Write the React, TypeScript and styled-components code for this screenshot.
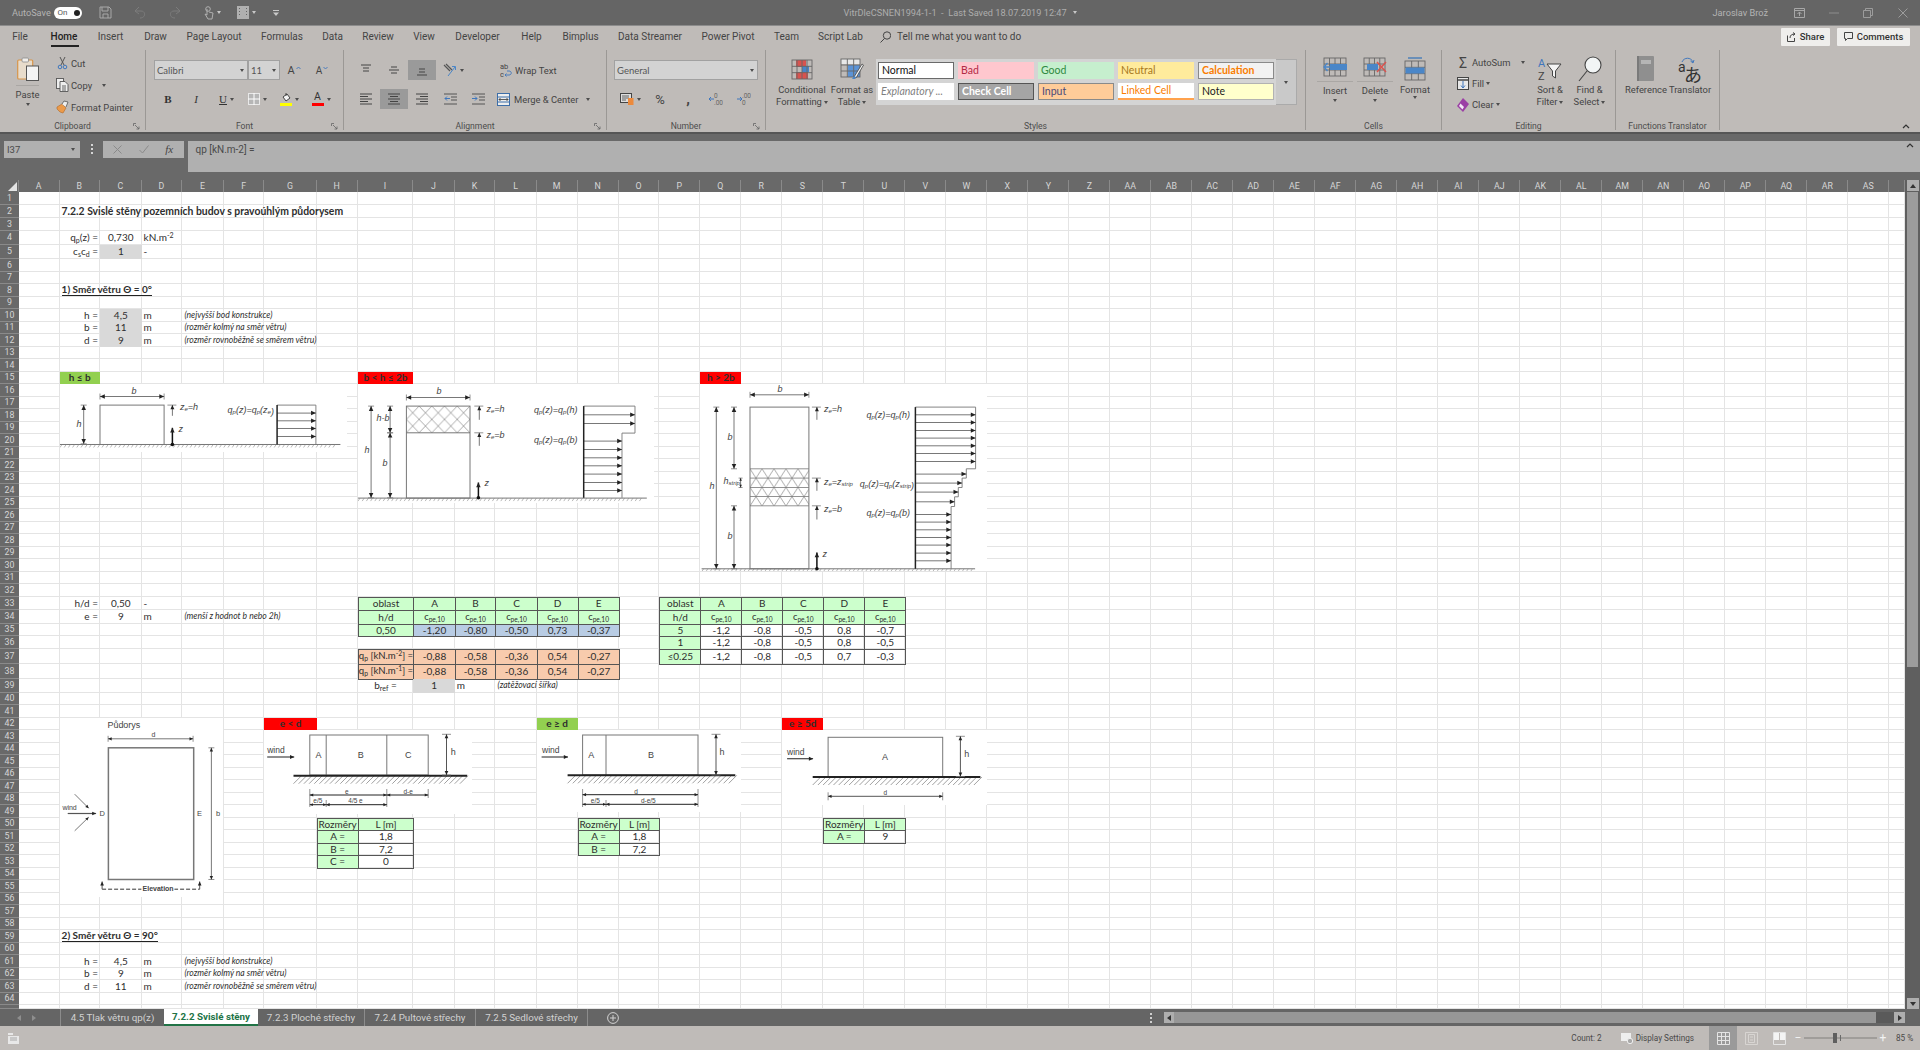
import React from "react";
import styled, { createGlobalStyle } from "styled-components";

const UI = `Roboto, "Liberation Sans", sans-serif`;
const CELL = `Lato, "Liberation Sans", sans-serif`;

const GlobalStyle = createGlobalStyle`
  html, body { margin: 0; padding: 0; background: #696969; }
  * { box-sizing: border-box; }
  #root { width: 1920px; height: 1050px; overflow: hidden; }
`;

const Window = styled.div`
  width: 1920px;
  height: 1050px;
  display: flex;
  flex-direction: column;
  overflow: hidden;
  font-family: ${UI};
  background: #696969;
`;

/* ---------- small shared parts ---------- */

const Ico = styled.svg`
  display: block;
  flex-shrink: 0;
`;

const Caret = styled.span<{ $light?: boolean }>`
  display: inline-block;
  flex-shrink: 0;
  width: 0;
  height: 0;
  border-left: 2.5px solid transparent;
  border-right: 2.5px solid transparent;
  border-top: 3px solid ${(p) => (p.$light ? "#c8c8c8" : "#4d4d4d")};
`;

/* ---------- title bar ---------- */

const TitleBar = styled.div`
  height: 26px;
  flex-shrink: 0;
  display: grid;
  grid-template-columns: 1fr auto 1fr;
  align-items: center;
  background: #656565;
  border-bottom: 1px solid #8c8c8c;
  color: #b4b4b4;
  font-size: 9.2px;
`;

const TitleLeft = styled.div`
  display: flex;
  align-items: center;
  padding-left: 12px;
`;

const AutoSaveLabel = styled.span`
  width: 41.5px;
`;

const Toggle = styled.div`
  width: 28.5px;
  height: 12px;
  border-radius: 6px;
  background: #fff;
  color: #555;
  display: flex;
  align-items: center;
  justify-content: space-between;
  padding: 0 2.5px 0 4px;
  font-size: 8px;
  margin-right: 8px;
`;

const ToggleDot = styled.i`
  width: 6px;
  height: 6px;
  border-radius: 50%;
  background: #222;
`;

const QatCell = styled.div<{ $w: number }>`
  width: ${(p) => p.$w}px;
  display: flex;
  align-items: center;
  justify-content: center;
  gap: 3px;
`;

const TitleText = styled.div`
  display: flex;
  align-items: center;
  gap: 6px;
  white-space: nowrap;
  color: #adadad;
`;

const TitleRight = styled.div`
  display: flex;
  align-items: center;
  justify-content: flex-end;
`;

const UserName = styled.span`
  margin-right: 14px;
`;

const WinButton = styled.div`
  width: 34.5px;
  display: flex;
  justify-content: center;
`;

/* ---------- ribbon ---------- */

const Ribbon = styled.div`
  height: 108px;
  flex-shrink: 0;
  background: #bfbbb8;
  border-bottom: 2px solid #565656;
  color: #444;
  font-size: 9.4px;
`;

const TabRow = styled.div`
  height: 24px;
  display: flex;
  align-items: flex-start;
  padding-right: 10px;
`;

const RibbonTab = styled.div<{ $w: number; $active?: boolean }>`
  width: ${(p) => p.$w}px;
  height: 21px;
  display: flex;
  align-items: center;
  justify-content: center;
  font-size: 10px;
  color: ${(p) => (p.$active ? "#222" : "#444")};
  font-weight: ${(p) => (p.$active ? 500 : 400)};
  position: relative;
  &::after {
    content: "";
    display: ${(p) => (p.$active ? "block" : "none")};
    position: absolute;
    left: 11px;
    right: 9px;
    bottom: 0;
    height: 2px;
    background: #222;
  }
`;

const SearchHint = styled.div`
  height: 21px;
  display: flex;
  align-items: center;
  gap: 6px;
  margin-left: 6px;
  font-size: 10px;
  color: #444;
`;

const TopActions = styled.div`
  margin-left: auto;
  display: flex;
  gap: 7px;
  margin-top: 2px;
`;

const TopButton = styled.div<{ $w: number }>`
  width: ${(p) => p.$w}px;
  height: 17.5px;
  background: #efeeec;
  border-radius: 1px;
  display: flex;
  align-items: center;
  justify-content: center;
  gap: 4px;
  font-size: 9.5px;
  font-weight: 500;
  color: #333;
`;

const GroupRow = styled.div`
  height: 82px;
  display: flex;
`;

const Group = styled.div<{ $w: number }>`
  width: ${(p) => p.$w}px;
  height: 80px;
  flex-shrink: 0;
  display: flex;
  flex-direction: column;
  border-right: 1px solid #9b9895;
`;

const GroupBody = styled.div<{ $pl: number; $col?: boolean }>`
  flex: 1;
  min-height: 0;
  display: flex;
  flex-direction: ${(p) => (p.$col ? "column" : "row")};
  padding-left: ${(p) => p.$pl}px;
`;

const GroupLabel = styled.div`
  height: 12px;
  margin-bottom: -2px;
  display: flex;
  align-items: center;
  justify-content: center;
  position: relative;
  font-size: 8.6px;
  color: #4c4c4c;
`;

const Launcher = styled.svg`
  position: absolute;
  right: 5px;
  top: 3px;
`;

const CollapseEnd = styled.div`
  flex: 1;
  display: flex;
  justify-content: flex-end;
  align-items: flex-end;
  padding: 0 10px 3px 0;
`;

/* clipboard */
const SplitButton = styled.div<{ $w: number }>`
  width: ${(p) => p.$w}px;
  display: flex;
  flex-direction: column;
  align-items: center;
  padding-top: 7px;
`;

const SplitRule = styled.div`
  align-self: stretch;
  height: 1px;
  margin: 4px 2px 3px;
  background: #aaa7a4;
`;

const SplitLabel = styled.div`
  height: 11px;
  line-height: 11px;
  margin-bottom: 3px;
`;

const SmallColumn = styled.div<{ $ml?: number; $w?: number }>`
  display: flex;
  flex-direction: column;
  margin-left: ${(p) => p.$ml ?? 0}px;
  width: ${(p) => (p.$w ? `${p.$w}px` : "auto")};
  padding-top: 2px;
`;

const SmallRow = styled.div<{ $h?: number }>`
  height: ${(p) => p.$h ?? 22}px;
  display: flex;
  align-items: center;
  gap: 2px;
  white-space: nowrap;
`;

const IconSlot = styled.div`
  width: 14px;
  display: flex;
  justify-content: center;
  flex-shrink: 0;
`;

/* tool rows */
const ToolRow = styled.div<{ $mt: number }>`
  display: flex;
  align-items: center;
  margin-top: ${(p) => p.$mt}px;
  height: 20px;
  white-space: nowrap;
`;

const ToolCell = styled.div<{ $w?: number; $on?: boolean }>`
  width: ${(p) => p.$w ?? 28}px;
  height: 20px;
  flex-shrink: 0;
  display: flex;
  align-items: center;
  justify-content: center;
  gap: 3px;
  background: ${(p) => (p.$on ? "#9a9a9a" : "transparent")};
`;

const Combo = styled.div<{ $w: number; $mr?: number }>`
  width: ${(p) => p.$w}px;
  height: 19.5px;
  margin-right: ${(p) => p.$mr ?? 0}px;
  flex-shrink: 0;
  display: flex;
  align-items: center;
  justify-content: space-between;
  padding: 0 3px 0 2px;
  background: #d3d3d3;
  border: 1px solid #a1a1a1;
  font-family: ${CELL};
  font-size: 9.5px;
  color: #555;
`;

const ToolLetter = styled.span<{ $bold?: boolean; $italic?: boolean; $under?: boolean }>`
  font-family: "Liberation Serif", serif;
  font-size: 11px;
  line-height: 11px;
  color: #333;
  font-weight: ${(p) => (p.$bold ? 700 : 400)};
  font-style: ${(p) => (p.$italic ? "italic" : "normal")};
  text-decoration: ${(p) => (p.$under ? "underline" : "none")};
`;

const SansLetter = styled.span<{ $size?: number; $bold?: boolean }>`
  font-size: ${(p) => p.$size ?? 11}px;
  font-weight: ${(p) => (p.$bold ? 700 : 400)};
  color: #444;
`;

const LetterWithBar = styled.div<{ $bar: string }>`
  display: flex;
  flex-direction: column;
  align-items: center;
  width: 12px;
  font-size: 10.5px;
  line-height: 10px;
  color: #333;
  &::after {
    content: "";
    width: 12px;
    height: 3px;
    background: ${(p) => p.$bar};
    margin-top: 1px;
  }
`;

const FillWithBar = styled(LetterWithBar)`
  line-height: 0;
`;

const TextAfter = styled.span<{ $ml?: number }>`
  margin-left: ${(p) => p.$ml ?? 3}px;
  display: inline-flex;
  align-items: center;
`;

/* big buttons */
const BigButton = styled.div<{ $w: number }>`
  width: ${(p) => p.$w}px;
  flex-shrink: 0;
  display: flex;
  flex-direction: column;
  align-items: center;
  padding-top: 7px;
`;

const BigIconBox = styled.div`
  height: 24px;
  display: flex;
  align-items: center;
`;

const BigText = styled.div`
  margin-top: 3px;
  line-height: 12px;
  text-align: center;
  white-space: nowrap;
  display: flex;
  flex-direction: column;
  align-items: center;
`;

const BigLine = styled.div`
  display: flex;
  align-items: center;
  gap: 2px;
`;

/* styles gallery */
const GalleryWrap = styled.div`
  display: flex;
  height: 46px;
  margin-top: 9px;
`;

const Gallery = styled.div`
  width: 400px;
  display: grid;
  grid-template-columns: repeat(5, 76px);
  grid-auto-rows: 17px;
  column-gap: 4px;
  row-gap: 4px;
  padding: 3px 0 0 2px;
  background: #d4d4d4;
`;

const StyleChip = styled.div<{
  $bg: string;
  $fg: string;
  $line?: string;
  $under?: string;
  $bold?: boolean;
  $italic?: boolean;
}>`
  display: flex;
  align-items: center;
  padding: 0 0 1px 3px;
  font-family: ${CELL};
  font-size: 10.5px;
  white-space: nowrap;
  background: ${(p) => p.$bg};
  color: ${(p) => p.$fg};
  border: ${(p) => (p.$line ? `1px solid ${p.$line}` : "none")};
  border-bottom: ${(p) => (p.$under ? `2px solid ${p.$under}` : p.$line ? `1px solid ${p.$line}` : "none")};
  font-weight: ${(p) => (p.$bold ? 700 : 400)};
  font-style: ${(p) => (p.$italic ? "italic" : "normal")};
`;

const GalleryMore = styled.div`
  width: 21px;
  display: flex;
  align-items: center;
  justify-content: center;
  background: #c9c9c9;
  border: 1px solid #aaa;
  border-left: none;
`;

/* ---------- formula bar ---------- */

const FormulaArea = styled.div`
  height: 46px;
  flex-shrink: 0;
  display: flex;
  align-items: flex-start;
  padding: 7px 0 0 4px;
  color: #4a4a4a;
  font-size: 9.5px;
`;

const NameBox = styled.div`
  width: 76px;
  height: 16.5px;
  display: flex;
  align-items: center;
  justify-content: space-between;
  padding: 0 5px 0 3px;
  background: #b0b0b0;
`;

const FormulaDots = styled.div`
  width: 23px;
  height: 16.5px;
  display: flex;
  flex-direction: column;
  align-items: center;
  justify-content: center;
  gap: 2px;
  & > i {
    width: 2px;
    height: 2px;
    background: #d6d6d6;
  }
`;

const FormulaButtons = styled.div`
  width: 80.5px;
  height: 16.5px;
  display: flex;
  align-items: center;
  justify-content: space-around;
  padding: 0 2px;
  background: #b0b0b0;
`;

const FxMark = styled.span`
  font-family: "Liberation Serif", serif;
  font-style: italic;
  font-size: 11px;
  color: #444;
`;

const FormulaInput = styled.div`
  flex: 1;
  height: 30.5px;
  margin-left: 4px;
  display: flex;
  justify-content: space-between;
  padding: 2px 6px 0 8px;
  background: #b0b0b0;
  font-size: 10px;
  line-height: 13px;
`;

/* ---------- sheet ---------- */

const SheetArea = styled.div`
  height: 829px;
  flex-shrink: 0;
  display: flex;
`;

const Stack = styled.div`
  width: 1905px;
  height: 829px;
  display: grid;
  overflow: hidden;
`;

const COL_W = [
  18.8, 40.8, 40.4, 41.6, 40.8, 41.3, 40.8, 52.2, 40.9, 55.9, 41.2, 40.8, 41.2, 40.9, 41.2, 40.6,
  ...Array.from({ length: 30 }, () => 41),
  15.4,
];
const ROW_H = [
  12, 12.7, 13.3, 13, 14, 14, 12.7,
  ...Array.from({ length: 26 }, () => 12.5),
  13, 14, 12.5, 12.5, 15, 15, 14,
  ...Array.from({ length: 25 }, () => 12.5),
  4,
];
const tracks = (a: number[]) => a.map((v) => `${v}px`).join(" ");

const SheetLayer = styled.div`
  grid-area: 1 / 1;
  display: grid;
  grid-template-columns: ${tracks(COL_W)};
  grid-template-rows: ${tracks(ROW_H)};
  width: 1905px;
  height: 829px;
`;

const CornerHead = styled.div`
  background: #696969;
  border-right: 1px solid #8a8a8a;
  overflow: hidden;
  display: flex;
  align-items: flex-end;
  justify-content: flex-end;
  padding: 0 1px 1px 0;
`;

const ColHead = styled.div`
  background: #696969;
  border-right: 1px solid #8a8a8a;
  color: #d6d6d6;
  font-size: 8.8px;
  display: flex;
  align-items: center;
  justify-content: center;
  overflow: hidden;
`;

const RowHead = styled.div`
  background: #696969;
  border-bottom: 1px solid #8a8a8a;
  color: #d6d6d6;
  font-size: 8.8px;
  display: flex;
  align-items: center;
  justify-content: center;
  overflow: hidden;
`;

const GridCell = styled.div`
  background: #fff;
  border-right: 1px solid #e4e4e4;
  border-bottom: 1px solid #e4e4e4;
`;

const COLS = (() => {
  const out: string[] = [];
  for (let i = 0; i < 46; i++) {
    out.push(i < 26 ? String.fromCharCode(65 + i) : "A" + String.fromCharCode(65 + i - 26));
  }
  return out;
})();

type CellProps = {
  $c: number;
  $r: number;
  $cs?: number;
  $bg?: string;
  $align?: "left" | "center" | "right";
  $bold?: boolean;
  $italic?: boolean;
  $size?: number;
  $box?: boolean;
};

const Cell = styled.div<CellProps>`
  grid-column: ${(p) => p.$c + 1} / span ${(p) => p.$cs ?? 1};
  grid-row: ${(p) => p.$r + 1};
  min-width: 0;
  display: flex;
  align-items: center;
  justify-content: ${(p) =>
    p.$align === "right" ? "flex-end" : p.$align === "center" ? "center" : "flex-start"};
  padding: 0 2px 1px;
  white-space: pre;
  font-family: ${CELL};
  font-size: ${(p) => p.$size ?? 10}px;
  line-height: 1;
  color: #2e2e2e;
  background: ${(p) => p.$bg ?? "transparent"};
  font-weight: ${(p) => (p.$bold ? 700 : 400)};
  font-style: ${(p) => (p.$italic ? "italic" : "normal")};
  ${(p) => (p.$box ? "border: 1px solid #555; margin: 0 -1px -1px 0;" : "")}
`;

const Rich = styled.span``;

const Sub = styled.sub`
  font-size: 70%;
  line-height: 0;
  vertical-align: -2px;
`;

const Sup = styled.sup`
  font-size: 70%;
  line-height: 0;
  vertical-align: 3px;
`;

const Under = styled.span`
  border-bottom: 1px solid #222;
  padding-bottom: 1px;
`;

const Drawing = styled.svg<{ $c: number; $r: number }>`
  grid-column: ${(p) => p.$c + 1};
  grid-row: ${(p) => p.$r + 1};
  justify-self: start;
  align-self: start;
  display: block;
  background: #fff;
`;

const Txt = styled.text<{ $s?: number; $plain?: boolean; $bold?: boolean }>`
  font-family: "Liberation Sans", sans-serif;
  font-size: ${(p) => p.$s ?? 9}px;
  font-style: ${(p) => (p.$plain ? "normal" : "italic")};
  font-weight: ${(p) => (p.$bold ? 700 : 400)};
  fill: #444;
  dominant-baseline: central;
`;

/* ---------- scrollbars ---------- */

const VScroll = styled.div`
  width: 15px;
  display: flex;
  flex-direction: column;
  padding-left: 1.5px;
  background: #5f5f5f;
`;

const ScrollBtn = styled.div<{ $w?: number; $h?: number }>`
  width: ${(p) => p.$w ?? 12}px;
  height: ${(p) => p.$h ?? 11}px;
  flex-shrink: 0;
  display: flex;
  align-items: center;
  justify-content: center;
  background: #aeaeae;
`;

const VThumb = styled.div`
  width: 11px;
  height: 475px;
  margin-top: 1px;
  background: #9c9c9c;
`;

const Spacer = styled.div`
  flex: 1;
`;

/* ---------- sheet tabs ---------- */

const TabBar = styled.div`
  height: 17px;
  flex-shrink: 0;
  display: flex;
  align-items: stretch;
  background: #656565;
`;

const TabNav = styled.div`
  width: 60px;
  display: flex;
  align-items: center;
  justify-content: center;
  gap: 11px;
  padding-right: 8px;
  color: #8e8e8e;
  font-size: 9px;
`;

const SheetTab = styled.div<{ $w: number; $active?: boolean; $noEdge?: boolean }>`
  width: ${(p) => p.$w}px;
  display: flex;
  align-items: center;
  justify-content: center;
  white-space: nowrap;
  font-size: 9.8px;
  background: ${(p) => (p.$active ? "#fff" : "transparent")};
  color: ${(p) => (p.$active ? "#217346" : "#d2d2d2")};
  font-weight: ${(p) => (p.$active ? 700 : 400)};
  border-left: ${(p) => (p.$active || p.$noEdge ? "none" : "1px solid #8c8c8c")};
  border-bottom: ${(p) => (p.$active ? "2px solid #217346" : "none")};
`;

const TabAdd = styled.div`
  width: 50px;
  border-left: 1px solid #8c8c8c;
  display: flex;
  align-items: center;
  justify-content: center;
`;

const TabDots = styled.div`
  margin-left: auto;
  width: 12px;
  display: flex;
  flex-direction: column;
  align-items: center;
  justify-content: center;
  gap: 2px;
  & > i {
    width: 2px;
    height: 2px;
    background: #cfcfcf;
  }
`;

const HScroll = styled.div`
  width: 763px;
  display: flex;
  align-items: center;
  padding-left: 7px;
  padding-right: 15px;
`;

const HTrack = styled.div`
  width: 704px;
  height: 11px;
  background: #979797;
`;

const HRest = styled.div`
  width: 18px;
  height: 11px;
  background: #5a5a5a;
`;

/* ---------- status bar ---------- */

const StatusBar = styled.div`
  height: 24px;
  flex-shrink: 0;
  display: flex;
  align-items: center;
  background: #bfbbb8;
  color: #4a4a4a;
  font-size: 8.2px;
  padding: 0 7px 0 8px;
`;

const StatusText = styled.span<{ $mr?: number; $ml?: number; $w?: number }>`
  margin-right: ${(p) => p.$mr ?? 0}px;
  margin-left: ${(p) => p.$ml ?? 0}px;
  width: ${(p) => (p.$w ? `${p.$w}px` : "auto")};
  white-space: nowrap;
`;

const ViewButton = styled.div<{ $on?: boolean }>`
  width: 28px;
  height: 24px;
  display: flex;
  align-items: center;
  justify-content: center;
  background: ${(p) => (p.$on ? "#9a9a9a" : "transparent")};
`;

const ZoomTrack = styled.div`
  width: 73px;
  height: 2px;
  margin: 0 1px;
  background: #a09d9a;
  position: relative;
`;

const ZoomThumb = styled.div`
  position: absolute;
  left: 29px;
  top: -4px;
  width: 4px;
  height: 10px;
  background: #5f5f5f;
`;

const ZoomTick = styled.div`
  position: absolute;
  left: 36px;
  top: -2px;
  width: 1px;
  height: 6px;
  background: #6a6a6a;
`;

const ZoomSign = styled.span`
  color: #f2f2f2;
  font-size: 12px;
  line-height: 12px;
  width: 10px;
  text-align: center;
`;

/* ---------- ribbon icons ---------- */

const Launch = () => (
  <Launcher width="7" height="7" viewBox="0 0 7 7" fill="none" stroke="#666" strokeWidth="0.8">
    <path d="M0.5 3V0.5H3M2 2l4 4M6 3.5V6H3.5" />
  </Launcher>
);

const TableGrid = ({ x, y, w, h, cols, rows }: { x: number; y: number; w: number; h: number; cols: number; rows: number }) => (
  <g stroke="#666" strokeWidth="0.9" fill="none">
    <rect x={x} y={y} width={w} height={h} />
    {Array.from({ length: cols - 1 }, (_, i) => (
      <line key={`c${i}`} x1={x + ((i + 1) * w) / cols} x2={x + ((i + 1) * w) / cols} y1={y} y2={y + h} />
    ))}
    {Array.from({ length: rows - 1 }, (_, i) => (
      <line key={`r${i}`} y1={y + ((i + 1) * h) / rows} y2={y + ((i + 1) * h) / rows} x1={x} x2={x + w} />
    ))}
  </g>
);

const PasteIcon = () => (
  <Ico width="22" height="24" viewBox="0 0 22 24">
    <rect x="0.7" y="3" width="15" height="19" rx="1" fill="#e8dccb" stroke="#d8954a" strokeWidth="1.2" />
    <rect x="5" y="1" width="6.5" height="4" rx="1" fill="#f1efec" stroke="#8a8a8a" strokeWidth="0.8" />
    <rect x="9.5" y="9" width="12" height="14.5" fill="#f4f4f4" stroke="#555" strokeWidth="1" />
  </Ico>
);

const ScissorsIcon = () => (
  <Ico width="11" height="14" viewBox="0 0 11 14" fill="none">
    <path d="M3 1l4 8M8 1L4 9" stroke="#555" strokeWidth="1" />
    <circle cx="3" cy="11" r="1.8" stroke="#3f77bd" strokeWidth="1" />
    <circle cx="8" cy="11" r="1.8" stroke="#3f77bd" strokeWidth="1" />
  </Ico>
);

const CopyIcon = () => (
  <Ico width="13" height="14" viewBox="0 0 13 14" fill="#eee" stroke="#555" strokeWidth="0.9">
    <rect x="0.5" y="0.5" width="7" height="10" />
    <path d="M4 3.5h5l3 3v7H4z" />
    <path d="M6 8h4M6 10h4M6 12h4" />
  </Ico>
);

const PainterIcon = () => (
  <Ico width="14" height="14" viewBox="0 0 14 14">
    <path d="M2 7l5-3 4 4-3 5-3-1-3-3z" fill="#eb9a4a" stroke="#b0692a" strokeWidth="0.6" />
    <path d="M7 4l2-3 4 1-2 5" fill="#eee" stroke="#555" strokeWidth="0.8" />
  </Ico>
);

const BorderIcon = () => (
  <Ico width="12" height="12" viewBox="0 0 12 12" stroke="#fff" strokeWidth="1" fill="#b6b6b6">
    <rect x="0.5" y="0.5" width="11" height="11" stroke="#e8e8e8" />
    <path d="M6 0v12M0 6h12" />
  </Ico>
);

const BucketIcon = () => (
  <Ico width="12" height="9" viewBox="0 0 12 9">
    <path d="M3 4l4-3 3 4-4 3z" fill="#f5f5f5" stroke="#333" strokeWidth="0.9" />
    <path d="M6 0v3" stroke="#333" strokeWidth="0.8" />
  </Ico>
);

const LinesIcon = ({ rows }: { rows: [number, number, number][] }) => (
  <Ico width="12" height="12" viewBox="0 0 12 12" stroke="#444" strokeWidth="1">
    {rows.map(([a, b, y], i) => (
      <line key={i} x1={a} x2={b} y1={y} y2={y} />
    ))}
  </Ico>
);

const OrientIcon = () => (
  <Ico width="14" height="14" viewBox="0 0 14 14" fill="none">
    <path d="M1 2l6 6M3 1l6 6" stroke="#555" strokeWidth="1.2" />
    <path d="M5 13L12 4M9 3.5h3.5V7" stroke="#4a86c8" strokeWidth="1" />
  </Ico>
);

const WrapIcon = () => (
  <Ico width="12" height="15" viewBox="0 0 12 15" fill="none">
    <text x="0" y="6" fontSize="7.5" fill="#444" fontFamily="Roboto">ab</text>
    <text x="0" y="14" fontSize="7.5" fill="#444" fontFamily="Roboto">c</text>
    <path d="M5 12h4c3 0 3-4 0-4H7M6.5 10.5L5 12l1.5 1.5" stroke="#3f77bd" strokeWidth="0.9" />
  </Ico>
);

const MergeIcon = () => (
  <Ico width="13" height="13" viewBox="0 0 13 13" fill="none">
    <rect x="0.5" y="0.5" width="12" height="12" fill="#eee" stroke="#3d6ea8" />
    <path d="M0 4h13M0 9h13" stroke="#3d6ea8" />
    <path d="M2 6.5h9M3.5 5L2 6.5 3.5 8M9.5 5L11 6.5 9.5 8" stroke="#333" strokeWidth="0.8" />
  </Ico>
);

const IndentIcon = ({ flip }: { flip?: boolean }) => (
  <Ico width="13" height="12" viewBox="0 0 13 12" strokeWidth="1" fill="none">
    <path d="M0 1h13M7 4h6M7 7h6M0 11h13" stroke="#555" />
    <path d={flip ? "M6 5.5H1M3 3.5l-2 2 2 2" : "M0 5.5h5M3 3.5l2 2-2 2"} stroke="#3f77bd" />
  </Ico>
);

const AccountingIcon = () => (
  <Ico width="14" height="12" viewBox="0 0 14 12">
    <rect x="0.5" y="0.5" width="11" height="9" fill="#ddd" stroke="#444" />
    <path d="M2 3h7M2 5h7M2 7h4" stroke="#444" strokeWidth="0.8" />
    <rect x="8" y="5" width="5.5" height="7" fill="#ec8a3c" />
  </Ico>
);

const DecimalIcon = ({ inc }: { inc?: boolean }) => (
  <Ico width="14" height="14" viewBox="0 0 14 14" fill="none">
    <text x="5" y="6" fontSize="6.5" fill="#666" fontFamily="Roboto">{inc ? "0" : ".00"}</text>
    <text x="5" y="13" fontSize="6.5" fill="#666" fontFamily="Roboto">{inc ? ".00" : "0"}</text>
    <path d="M0 7h5" stroke="#3f77bd" />
    <path d={inc ? "M2 5L0 7l2 2" : "M3 5l2 2-2 2"} stroke="#3f77bd" />
  </Ico>
);

const CondFormatIcon = () => (
  <Ico width="22" height="21" viewBox="0 0 22 21">
    <rect x="5" y="1" width="10" height="7" fill="#d9534f" />
    <rect x="11" y="7" width="7" height="6" fill="#4a86c8" />
    <rect x="5" y="13" width="12" height="7" fill="#d9534f" />
    <TableGrid x={1} y={1} w={20} h={19} cols={4} rows={3} />
  </Ico>
);

const FormatTableIcon = () => (
  <Ico width="24" height="22" viewBox="0 0 24 22">
    <rect x="1" y="1" width="19" height="5" fill="#e8e8e8" />
    <rect x="8" y="7" width="12" height="12" fill="#5b93d6" />
    <TableGrid x={1} y={1} w={19} h={18} cols={3} rows={3} />
    <path d="M14 19l8-13 1.5 1L16 20z" fill="#f4f4f4" stroke="#444" strokeWidth="0.8" />
    <path d="M12 21l2-3 2 1-1 2z" fill="#4a86c8" />
  </Ico>
);

const InsertCellIcon = () => (
  <Ico width="24" height="20" viewBox="0 0 24 20" fill="none">
    <TableGrid x={1} y={1} w={22} h={18} cols={4} rows={3} />
    <rect x="7" y="7" width="17" height="6" fill="#4a86c8" />
    <path d="M14 10H1M4.5 6L1 10l3.5 4" stroke="#4a86c8" strokeWidth="1.3" />
  </Ico>
);

const DeleteCellIcon = () => (
  <Ico width="24" height="20" viewBox="0 0 24 20" fill="none">
    <TableGrid x={1} y={1} w={21} h={18} cols={4} rows={3} />
    <rect x="4" y="7" width="11" height="6" fill="#4a86c8" />
    <path d="M14 5l9 10M23 5L14 15" stroke="#d9534f" strokeWidth="1.5" />
  </Ico>
);

const FormatCellIcon = () => (
  <Ico width="22" height="24" viewBox="0 0 22 24" fill="none">
    <path d="M4 1h14" stroke="#6a8fb8" strokeWidth="2" />
    <TableGrid x={1} y={4} w={20} h={19} cols={3} rows={3} />
    <rect x="1.5" y="10.5" width="19" height="6" fill="#4a86c8" />
  </Ico>
);

const FillIcon = () => (
  <Ico width="12" height="13" viewBox="0 0 12 13" fill="none">
    <rect x="0.5" y="0.5" width="11" height="12" fill="#e8e8e8" stroke="#444" />
    <path d="M0 3h12" stroke="#444" strokeWidth="1.5" />
    <path d="M6 4v7M4 8.5L6 11l2-2.5" stroke="#3f77bd" />
  </Ico>
);

const ClearIcon = () => (
  <Ico width="12" height="14" viewBox="0 0 12 14">
    <path d="M6 0l6 6-6 8-6-6z" fill="#9b3fa5" />
    <path d="M3.5 5.5L7 9l-1.5 2.5L2 8z" fill="#f3e8f5" />
  </Ico>
);

const SortIcon = () => (
  <Ico width="24" height="25" viewBox="0 0 24 25">
    <text x="0" y="10" fontSize="11" fill="#3f77bd" fontFamily="Roboto">A</text>
    <text x="0" y="23" fontSize="11" fill="#444" fontFamily="Roboto">Z</text>
    <path d="M9 7h14l-5.5 7v7l-3-2v-5z" fill="#f4f4f4" stroke="#444" />
  </Ico>
);

const MagnifierIcon = () => (
  <Ico width="24" height="26" viewBox="0 0 24 26">
    <circle cx="15" cy="9" r="8" fill="#f2f5f5" stroke="#444" strokeWidth="1.1" />
    <path d="M9 15L1 25" stroke="#444" strokeWidth="1.1" />
  </Ico>
);

const ReferenceIcon = () => (
  <Ico width="18" height="26" viewBox="0 0 18 26">
    <rect x="0" y="0" width="17" height="25" rx="1" fill="#8f8f8f" />
    <rect x="4" y="4" width="10" height="4" fill="#b5b5b5" />
    <rect x="0" y="0" width="2" height="25" fill="#7a7a7a" />
  </Ico>
);

const TranslatorIcon = () => (
  <Ico width="24" height="27" viewBox="0 0 24 27" fill="none">
    <text x="0" y="16" fontSize="14" fill="#333" fontFamily="Roboto">a</text>
    <text x="6" y="26" fontSize="18" fill="#333" fontFamily="'Noto Sans CJK JP', sans-serif">あ</text>
    <path d="M4 6c2-5 9-5 11 0M12.5 5l2.5 2 1-3" stroke="#3f77bd" strokeWidth="1" />
  </Ico>
);

const CaretUp = () => (
  <Ico width="8" height="5" viewBox="0 0 8 5" fill="none">
    <path d="M1 4l3-3 3 3" stroke="#333" strokeWidth="1.2" />
  </Ico>
);

const GrowMark = styled(({ up, className }: { up?: boolean; className?: string }) => (
  <Ico className={className} width="5" height="4" viewBox="0 0 5 4" fill="none">
    <path d={up ? "M0.5 3L2.5 1l2 2" : "M0.5 1L2.5 3l2-2"} stroke="#3f77bd" strokeWidth="0.9" />
  </Ico>
))`
  margin: 0 0 5px -2px;
`;

type LineRow = [number, number, number];
const ALIGN: Record<string, LineRow[]> = {
  top: [[1, 11, 1], [3, 9, 4], [3, 9, 7]],
  mid: [[3, 9, 3], [1, 11, 6], [3, 9, 9]],
  bot: [[3, 9, 5], [3, 9, 8], [1, 11, 11]],
  left: [[0, 12, 1], [0, 8, 3.5], [0, 12, 6], [0, 8, 8.5], [0, 12, 11]],
  center: [[0, 12, 1], [2, 10, 3.5], [0, 12, 6], [2, 10, 8.5], [0, 12, 11]],
  right: [[0, 12, 1], [4, 12, 3.5], [0, 12, 6], [4, 12, 8.5], [0, 12, 11]],
};

/* ---------- drawing helpers ---------- */

type HeadProps = { x: number; y: number; a: number; s?: number; fill?: string };

const Head = ({ x, y, a, s = 3.2, fill = "#222" }: HeadProps) => (
  <polygon
    points={`0,0 ${-s * 1.5},${-s * 0.7} ${-s * 1.5},${s * 0.7}`}
    transform={`translate(${x} ${y}) rotate(${a})`}
    fill={fill}
  />
);

const Arrow = ({
  x1, y1, x2, y2, w = 0.8, s, color = "#555", two,
}: {
  x1: number; y1: number; x2: number; y2: number; w?: number; s?: number; color?: string; two?: boolean;
}) => {
  const a = (Math.atan2(y2 - y1, x2 - x1) * 180) / Math.PI;
  return (
    <g>
      <line x1={x1} y1={y1} x2={x2} y2={y2} stroke={color} strokeWidth={w} />
      <Head x={x2} y={y2} a={a} s={s} />
      {two && <Head x={x1} y={y1} a={a + 180} s={s} />}
    </g>
  );
};

const HDim = ({ y, x1, x2, t = 3, s, w }: { y: number; x1: number; x2: number; t?: number; s?: number; w?: number }) => (
  <g>
    <path d={`M${x1} ${y - t}V${y + t}M${x2} ${y - t}V${y + t}`} stroke="#777" strokeWidth="0.8" />
    <Arrow x1={x1} y1={y} x2={x2} y2={y} two s={s} w={w} />
  </g>
);

const VDim = ({ x, y1, y2, t = 3, s, w }: { x: number; y1: number; y2: number; t?: number; s?: number; w?: number }) => (
  <g>
    <path d={`M${x - t} ${y1}H${x + t}M${x - t} ${y2}H${x + t}`} stroke="#777" strokeWidth="0.8" />
    <Arrow x1={x} y1={y1} x2={x} y2={y2} two s={s} w={w} />
  </g>
);

const ZMark = ({ x, y, y2 }: { x: number; y: number; y2: number }) => (
  <g>
    <path d={`M${x - 5} ${y}H${x + 4}`} stroke="#777" strokeWidth="0.8" />
    <Arrow x1={x} y1={y2} x2={x} y2={y} s={2.8} />
  </g>
);

const ZAxis = ({ x, y1, y2 }: { x: number; y1: number; y2: number }) => (
  <g>
    <Arrow x1={x} y1={y2} x2={x} y2={y1} w={1.5} s={3.2} color="#111" />
    <circle cx={x} cy={y2} r="1.8" fill="#111" />
  </g>
);

const Ground = ({ x1, x2, y }: { x1: number; x2: number; y: number }) => {
  const n = Math.floor((x2 - x1) / 4.2);
  return (
    <g>
      <line x1={x1} x2={x2} y1={y} y2={y} stroke="#666" strokeWidth="0.9" />
      {Array.from({ length: n }, (_, i) => (
        <line key={i} x1={x1 + i * 4.2 + 2} y1={y} x2={x1 + i * 4.2} y2={y + 3} stroke="#888" strokeWidth="0.6" />
      ))}
    </g>
  );
};

const HeavyGround = ({ x1, x2, y }: { x1: number; x2: number; y: number }) => {
  const n = Math.floor((x2 - x1) / 5.2);
  return (
    <g>
      {Array.from({ length: n }, (_, i) => (
        <line key={i} x1={x1 + i * 5.2 + 8} y1={y} x2={x1 + i * 5.2} y2={y + 8} stroke="#777" strokeWidth="0.7" />
      ))}
      <line x1={x1} x2={x2} y1={y} y2={y} stroke="#222" strokeWidth="2" />
    </g>
  );
};

const Ze = ({ x, y, v }: { x: number; y: number; v: React.ReactNode }) => (
  <Txt x={x} y={y}>
    z<tspan dy="2" fontSize="6">e</tspan>
    <tspan dy="-2">={v}</tspan>
  </Txt>
);

const Qp = ({ x, y, arg }: { x: number; y: number; arg: React.ReactNode }) => (
  <Txt x={x} y={y} textAnchor="end">
    q<tspan dy="2" fontSize="6">p</tspan>
    <tspan dy="-2">(z)=q</tspan>
    <tspan dy="2" fontSize="6">p</tspan>
    <tspan dy="-2">(</tspan>
    {arg}
    <tspan>)</tspan>
  </Txt>
);

const Wall = ({ x, y1, y2 }: { x: number; y1: number; y2: number }) => (
  <line x1={x} x2={x} y1={y1} y2={y2} stroke="#222" strokeWidth="1.5" />
);

const Building = ({ x, y, w, h, splits = [] }: { x: number; y: number; w: number; h: number; splits?: number[] }) => (
  <g stroke="#777" strokeWidth="1" fill="none">
    <rect x={x} y={y} width={w} height={h} />
    {splits.map((s) => (
      <line key={s} x1={s} x2={s} y1={y} y2={y + h} />
    ))}
  </g>
);

const box = (x: number, y: number, w: number, h: number) => ({
  width: w,
  height: h,
  viewBox: `${x} ${y} ${w} ${h}`,
});

const DrawingA = () => (
  <Drawing $c={2} $r={16} {...box(59.6, 384.2, 287.4, 68)}>
    <Ground x1={59.6} x2={340} y={444.7} />
    <Building x={99.6} y={405.3} w={64.1} h={39.4} />
    <HDim y={396.7} x1={99.6} x2={163.7} />
    <Txt x={131} y={391}>b</Txt>
    <VDim x={83.3} y1={405.3} y2={444} />
    <Txt x={76} y={424}>h</Txt>
    <ZMark x={172} y={405.3} y2={416} />
    <Ze x={179.6} y={407} v="h" />
    <ZAxis x={172} y1={428} y2={444.7} />
    <Txt x={178} y={429}>z</Txt>
    <Qp x={273.5} y={410} arg={<tspan>z<tspan dy="2" fontSize="6">e</tspan><tspan dy="-2"></tspan></tspan>} />
    <path d="M276.7 405.3H315.5V444.7" stroke="#777" fill="none" strokeWidth="0.9" />
    {[413.3, 421, 428.7, 436.7].map((y) => (
      <Arrow key={y} x1={276.7} y1={y} x2={315.5} y2={y} />
    ))}
    <Wall x={276.7} y1={405.3} y2={444.7} />
  </Drawing>
);

const DrawingB = () => (
  <Drawing $c={9} $r={16} {...box(357.6, 384.2, 296, 119)}>
    <defs>
      <pattern id="lattice" width="12.7" height="13.3" patternUnits="userSpaceOnUse" x="406" y="406.3">
        <path d="M0 0L12.7 13.3M12.7 0L0 13.3" stroke="#888" strokeWidth="0.7" />
      </pattern>
      <pattern id="latticeStrip" width="12" height="18.6" patternUnits="userSpaceOnUse" x="750.4" y="469">
        <path d="M0 0L12 18.6M12 0L0 18.6" stroke="#888" strokeWidth="0.7" />
      </pattern>
    </defs>
    <Ground x1={357.6} x2={646.4} y={498.3} />
    <rect x={406} y={406.3} width={63.6} height={26.7} fill="url(#lattice)" />
    <Building x={406} y={406.3} w={63.6} h={92} />
    <line x1={406} x2={469.6} y1={433} y2={433} stroke="#777" />
    <HDim y={397.7} x1={406} x2={469.6} />
    <Txt x={436} y={391.7}>b</Txt>
    <VDim x={370.7} y1={406.3} y2={498} />
    <Txt x={364} y={450.7}>h</Txt>
    <VDim x={389.7} y1={406.3} y2={433} />
    <VDim x={389.7} y1={433} y2={498} />
    <Txt x={376} y={418.7}>h-b</Txt>
    <Txt x={382} y={463.7}>b</Txt>
    <ZMark x={478.9} y={406.3} y2={420} />
    <Ze x={486} y={409.3} v="h" />
    <ZMark x={478.9} y={433} y2={446} />
    <Ze x={486} y={435.7} v="b" />
    <ZAxis x={478} y1={482.7} y2={498} />
    <Txt x={484} y={483.3}>z</Txt>
    <Qp x={577} y={410.7} arg={<tspan>h</tspan>} />
    <Qp x={577} y={440.7} arg={<tspan>b</tspan>} />
    <path d="M583.3 406.3H634.6V433.3H621.6V498" stroke="#777" fill="none" strokeWidth="0.9" />
    {[415, 423.7].map((y) => (
      <Arrow key={y} x1={583.3} y1={y} x2={634.6} y2={y} />
    ))}
    {[441.3, 449.7, 458, 466, 474.3, 482.7, 490.7].map((y) => (
      <Arrow key={y} x1={583.3} y1={y} x2={621.6} y2={y} />
    ))}
    <Wall x={583.3} y1={406.3} y2={498} />
  </Drawing>
);

const DrawingC = () => (
  <Drawing $c={17} $r={16} {...box(700.4, 384.2, 287, 187)}>
    <Ground x1={702} x2={975.5} y={569} />
    <rect x={750.4} y={469} width={58.9} height={37} fill="url(#latticeStrip)" />
    <Building x={750.4} y={407.3} w={58.9} h={161.7} />
    {[469, 478.3, 487.7, 496.7, 506].map((y) => (
      <line key={y} x1={750.4} x2={809.3} y1={y} y2={y} stroke="#777" strokeWidth="0.8" />
    ))}
    <HDim y={395} x1={750.4} x2={809.3} />
    <Txt x={778} y={389.7}>b</Txt>
    <VDim x={716.7} y1={407.3} y2={569} />
    <Txt x={710} y={486}>h</Txt>
    <VDim x={734.4} y1={407.3} y2={469} />
    <Txt x={728} y={437}>b</Txt>
    <VDim x={741} y1={478.3} y2={487.7} s={1.8} t={2} />
    <Txt x={724} y={481}>
      h<tspan dy="2" fontSize="6">strip</tspan>
    </Txt>
    <VDim x={734.4} y1={506} y2={569} />
    <Txt x={728} y={536}>b</Txt>
    <ZMark x={817.3} y={407.3} y2={420} />
    <Ze x={824.4} y={409.3} v="h" />
    <ZMark x={817.3} y={478.3} y2={491} />
    <Ze x={824.4} y={482.7} v={<tspan>z<tspan dy="2" fontSize="6">strip</tspan></tspan>} />
    <ZMark x={817.3} y={506} y2={519.7} />
    <Ze x={824.4} y={509} v="b" />
    <ZAxis x={817.3} y1={552.7} y2={569} />
    <Txt x={823} y={554}>z</Txt>
    <Qp x={910.3} y={415.3} arg={<tspan>h</tspan>} />
    <Qp x={914.5} y={484} arg={<tspan>z<tspan dy="2" fontSize="6">strip</tspan><tspan dy="-2"></tspan></tspan>} />
    <Qp x={910.3} y={513.3} arg={<tspan>b</tspan>} />
    <path
      d="M915.8 407.3H976V469H966.7V478.3H962.5V487.7H958.7V497H955V506.7H951.5V569"
      stroke="#777"
      fill="none"
      strokeWidth="0.9"
    />
    {[415, 422.7, 430.7, 438.3, 446, 453.7, 461.7].map((y) => (
      <Arrow key={y} x1={915.8} y1={y} x2={976} y2={y} />
    ))}
    <Arrow x1={915.8} y1={474.3} x2={966.7} y2={474.3} />
    <Arrow x1={915.8} y1={483.3} x2={962.5} y2={483.3} />
    <Arrow x1={915.8} y1={492.3} x2={958.7} y2={492.3} />
    <Arrow x1={915.8} y1={502} x2={955} y2={502} />
    {[514.7, 522.3, 530, 537.7, 545.3, 553.3, 561].map((y) => (
      <Arrow key={y} x1={915.8} y1={y} x2={951.5} y2={y} />
    ))}
    <Wall x={915.8} y1={407.3} y2={569} />
  </Drawing>
);

const PlanDrawing = () => (
  <Drawing $c={2} $r={42} {...box(59.6, 717.5, 163.7, 179)}>
    <Txt x={107} y={724.3} $plain>Půdorys</Txt>
    <HDim y={738.3} x1={107.7} x2={192.7} s={2.4} t={3} />
    <Txt x={153} y={734} $plain $s={7} textAnchor="middle">d</Txt>
    <rect x={108} y={747.3} width={85.3} height={131.7} fill="none" stroke="#777" strokeWidth="1.5" />
    <VDim x={211} y1={747.3} y2={879} s={2.4} />
    <Txt x={215.7} y={812.7} $plain $s={7.5}>b</Txt>
    <Txt x={99} y={813.3} $plain $s={7.5}>D</Txt>
    <Txt x={196.5} y={813.3} $plain $s={7.5}>E</Txt>
    <Txt x={62} y={807} $plain $s={7}>wind</Txt>
    <Arrow x1={67.3} y1={813} x2={95.7} y2={813} w={1.2} s={2.6} />
    <Arrow x1={74.3} y1={793.7} x2={88.3} y2={807.7} s={2.2} />
    <Arrow x1={74.3} y1={830.3} x2={88.3} y2={816.7} s={2.2} />
    <line x1={101.7} x2={199.3} y1={888.7} y2={888.7} stroke="#333" strokeWidth="1" strokeDasharray="4 2" />
    <rect x={141} y={884} width={33} height={9} fill="#fff" />
    <Txt x={157.7} y={888.5} $plain $bold $s={7} textAnchor="middle">Elevation</Txt>
    <Arrow x1={101.7} y1={888.7} x2={101.7} y2={881} w={1} s={2.6} />
    <Arrow x1={199.3} y1={888.7} x2={199.3} y2={881} w={1} s={2.6} />
  </Drawing>
);

const Wind = ({ x, tx, y, x2 }: { x: number; tx: number; y: number; x2: number }) => (
  <g>
    <Txt x={tx} y={y - 7} $plain $s={8.5}>wind</Txt>
    <Arrow x1={x} y1={y} x2={x2} y2={y} w={1.2} s={2.8} color="#444" />
  </g>
);

const Lbl = ({ x, y, t, s = 9 }: { x: number; y: number; t: string; s?: number }) => (
  <Txt x={x} y={y} $plain $s={s} textAnchor="middle">{t}</Txt>
);

const ElevationCaseOne = () => (
  <Drawing $c={7} $r={43} {...box(264.5, 730, 207.5, 84)}>
    <Building x={310.3} y={735} w={118.4} h={40} splits={[326.7, 387.3]} />
    <HeavyGround x1={294} x2={467.7} y={775.7} />
    <Wind x={267.7} tx={267.7} y={757} x2={294.7} />
    <Lbl x={319} y={755} t="A" />
    <Lbl x={361.3} y={755} t="B" />
    <Lbl x={408.7} y={755} t="C" />
    <VDim x={447} y1={734.3} y2={775} t={4.5} s={2.6} w={1} />
    <Lbl x={453.7} y={752.3} t="h" />
    <path d="M310.3 789V807M387.3 789V807M428.7 789V798M326.7 800V807" stroke="#777" strokeWidth="0.8" />
    <Arrow x1={310.3} y1={795} x2={387.3} y2={795} two s={2.3} w={1} color="#222" />
    <Arrow x1={387.3} y1={795} x2={428.7} y2={795} two s={2.3} w={1} color="#222" />
    <Arrow x1={310.3} y1={804.7} x2={326.7} y2={804.7} two s={2} w={1} color="#222" />
    <Arrow x1={326.7} y1={804.7} x2={387.3} y2={804.7} two s={2.3} w={1} color="#222" />
    <Lbl x={347.3} y={791.5} t="e" s={6.5} />
    <Lbl x={408.7} y={791.5} t="d-e" s={6.5} />
    <Lbl x={318.3} y={800.5} t="e/5" s={6.5} />
    <Lbl x={356} y={800.5} t="4/5 e" s={6.5} />
  </Drawing>
);

const ElevationCaseTwo = () => (
  <Drawing $c={13} $r={43} {...box(536.7, 730, 204.5, 82)}>
    <Building x={582.3} y={735} w={115.4} h={40} splits={[605.7]} />
    <HeavyGround x1={567.3} x2={735} y={775.3} />
    <Wind x={541.3} tx={541.7} y={757} x2={567.7} />
    <Lbl x={591} y={755} t="A" />
    <Lbl x={650.7} y={755} t="B" />
    <VDim x={715.7} y1={734.3} y2={775} t={4.5} s={2.6} w={1} />
    <Lbl x={721.7} y={752.3} t="h" />
    <path d="M582.3 789V807M697.7 789V807M605.7 800V807" stroke="#777" strokeWidth="0.8" />
    <Arrow x1={582.3} y1={794.7} x2={697.7} y2={794.7} two s={2.3} w={1} color="#222" />
    <Arrow x1={582.3} y1={804.3} x2={605.7} y2={804.3} two s={2} w={1} color="#222" />
    <Arrow x1={605.7} y1={804.3} x2={697.7} y2={804.3} two s={2.3} w={1} color="#222" />
    <Lbl x={635.7} y={791} t="d" s={6.5} />
    <Lbl x={595} y={800} t="e/5" s={6.5} />
    <Lbl x={648} y={800} t="d-e/5" s={6.5} />
  </Drawing>
);

const ElevationCaseThree = () => (
  <Drawing $c={19} $r={43} {...box(782.6, 730, 205, 75)}>
    <Building x={828.7} y={737.3} w={114.6} h={39.4} />
    <HeavyGround x1={813.3} x2={981} y={777} />
    <Wind x={787.7} tx={787.7} y={758.7} x2={813.7} />
    <Lbl x={885.7} y={756.7} t="A" />
    <VDim x={961} y1={736.3} y2={776.5} t={4.5} s={2.6} w={1} />
    <Lbl x={967.3} y={754} t="h" />
    <HDim y={796.3} x1={828.7} x2={943.3} s={2.3} w={1} t={4} />
    <Lbl x={886} y={792.3} t="d" s={6.5} />
  </Drawing>
);

/* ---------- sheet data ---------- */

const GREY = "#d9d9d9";
const LABEL_GREEN = "#92d050";
const RED = "#ff0000";
const MINT = "#ccffcc";
const BLUE = "#b8cce4";
const PEACH = "#f8cbad";

const LETTERS = ["A", "B", "C", "D", "E"];
const Cpe = () => (
  <Rich>
    c<Sub>pe,10</Sub>
  </Rich>
);

const WindBlock = ({ top, b, d, grey, title }: { top: number; b: string; d: string; grey?: boolean; title: string }) => (
  <>
    <Cell $c={2} $r={top - 2} $bold $cs={3}>
      <Under>{title}</Under>
    </Cell>
    {[
      ["h =", "4,5", "(nejvyšší bod konstrukce)"],
      ["b =", b, "(rozměr kolmý na směr větru)"],
      ["d =", d, "(rozměr rovnoběžně se směrem větru)"],
    ].map(([name, value, note], i) => (
      <React.Fragment key={name}>
        <Cell $c={2} $r={top + i} $align="right">{name}</Cell>
        <Cell $c={3} $r={top + i} $align="center" $bg={grey ? GREY : undefined}>{value}</Cell>
        <Cell $c={4} $r={top + i}>m</Cell>
        <Cell $c={5} $r={top + i} $italic $size={8.6}>{note}</Cell>
      </React.Fragment>
    ))}
  </>
);

const CoefHead = ({ c }: { c: number }) => (
  <>
    <Cell $c={c} $r={33} $box $bg={MINT} $align="center">oblast</Cell>
    {LETTERS.map((l, i) => (
      <Cell key={l} $c={c + 1 + i} $r={33} $box $bg={MINT} $align="center">{l}</Cell>
    ))}
    <Cell $c={c} $r={34} $box $bg={MINT} $align="center">h/d</Cell>
    {LETTERS.map((l, i) => (
      <Cell key={l} $c={c + 1 + i} $r={34} $box $bg={MINT} $align="center" $size={9.4}><Cpe /></Cell>
    ))}
  </>
);

const CoefRows = ({ c, rows }: { c: number; rows: [string, string[]][] }) => (
  <>
    {rows.map(([head, values], r) => (
      <React.Fragment key={head}>
        <Cell $c={c} $r={35 + r} $box $bg={MINT} $align="center">{head}</Cell>
        {values.map((v, i) => (
          <Cell key={i} $c={c + 1 + i} $r={35 + r} $box $align="center">{v}</Cell>
        ))}
      </React.Fragment>
    ))}
  </>
);

const LengthTable = ({ c, rows }: { c: number; rows: [string, string][] }) => (
  <>
    <Cell $c={c} $r={50} $box $bg={MINT} $align="center">Rozměry</Cell>
    <Cell $c={c + 1} $r={50} $box $bg={MINT} $align="center">L [m]</Cell>
    {rows.map(([n, v], i) => (
      <React.Fragment key={n}>
        <Cell $c={c} $r={51 + i} $box $bg={MINT} $align="center">{n}</Cell>
        <Cell $c={c + 1} $r={51 + i} $box $align="center">{v}</Cell>
      </React.Fragment>
    ))}
  </>
);

const PressureRow = ({ r, exp }: { r: number; exp: string }) => (
  <>
    <Cell $c={9} $r={r} $box $bg={PEACH} $align="center" $size={9.6}>
      <Rich>q<Sub>p</Sub> [kN.m<Sup>{exp}</Sup>] =</Rich>
    </Cell>
    {["-0,88", "-0,58", "-0,36", "0,54", "-0,27"].map((v, i) => (
      <Cell key={i} $c={10 + i} $r={r} $box $bg={PEACH} $align="center">{v}</Cell>
    ))}
  </>
);

const SheetContent = () => (
  <SheetLayer>
    <Cell $c={2} $r={2} $cs={8} $bold $size={10.4}>
      7.2.2 Svislé stěny pozemních budov s pravoúhlým půdorysem
    </Cell>
    <Cell $c={2} $r={4} $align="right"><Rich>q<Sub>p</Sub>(z) =</Rich></Cell>
    <Cell $c={3} $r={4} $align="center">0,730</Cell>
    <Cell $c={4} $r={4}><Rich>kN.m<Sup>-2</Sup></Rich></Cell>
    <Cell $c={2} $r={5} $align="right"><Rich>c<Sub>s</Sub>c<Sub>d</Sub> =</Rich></Cell>
    <Cell $c={3} $r={5} $align="center" $bg={GREY}>1</Cell>
    <Cell $c={4} $r={5}>-</Cell>

    <WindBlock top={10} b="11" d="9" grey title="1) Směr větru Θ = 0°" />

    <Cell $c={2} $r={15} $align="center" $bold $bg={LABEL_GREEN}>h ≤ b</Cell>
    <Cell $c={9} $r={15} $align="center" $bold $bg={RED}>b &lt; h ≤ 2b</Cell>
    <Cell $c={17} $r={15} $align="center" $bold $bg={RED}>h &gt; 2b</Cell>

    <DrawingA />
    <DrawingB />
    <DrawingC />

    <Cell $c={2} $r={33} $align="right">h/d =</Cell>
    <Cell $c={3} $r={33} $align="center">0,50</Cell>
    <Cell $c={4} $r={33}>-</Cell>
    <Cell $c={2} $r={34} $align="right">e =</Cell>
    <Cell $c={3} $r={34} $align="center">9</Cell>
    <Cell $c={4} $r={34}>m</Cell>
    <Cell $c={5} $r={34} $italic $size={8.6}>(menší z hodnot b nebo 2h)</Cell>

    <CoefHead c={9} />
    <Cell $c={9} $r={35} $box $bg={MINT} $align="center">0,50</Cell>
    {["-1,20", "-0,80", "-0,50", "0,73", "-0,37"].map((v, i) => (
      <Cell key={i} $c={10 + i} $r={35} $box $bg={BLUE} $align="center">{v}</Cell>
    ))}
    <PressureRow r={37} exp="-2" />
    <PressureRow r={38} exp="-1" />
    <Cell $c={9} $r={39} $align="center"><Rich>b<Sub>ref</Sub> =</Rich></Cell>
    <Cell $c={10} $r={39} $align="center" $bg={GREY}>1</Cell>
    <Cell $c={11} $r={39}>m</Cell>
    <Cell $c={12} $r={39} $italic $size={8.6}>(zatěžovací šířka)</Cell>

    <CoefHead c={16} />
    <CoefRows
      c={16}
      rows={[
        ["5", ["-1,2", "-0,8", "-0,5", "0,8", "-0,7"]],
        ["1", ["-1,2", "-0,8", "-0,5", "0,8", "-0,5"]],
        ["≤0.25", ["-1,2", "-0,8", "-0,5", "0,7", "-0,3"]],
      ]}
    />

    <PlanDrawing />
    <Cell $c={7} $r={42} $align="center" $bold $bg={RED}>e &lt; d</Cell>
    <Cell $c={13} $r={42} $align="center" $bold $bg={LABEL_GREEN}>e ≥ d</Cell>
    <Cell $c={19} $r={42} $align="center" $bold $bg={RED}>e ≥ 5d</Cell>
    <ElevationCaseOne />
    <ElevationCaseTwo />
    <ElevationCaseThree />

    <LengthTable c={8} rows={[["A =", "1,8"], ["B =", "7,2"], ["C =", "0"]]} />
    <LengthTable c={14} rows={[["A =", "1,8"], ["B =", "7,2"]]} />
    <LengthTable c={20} rows={[["A =", "9"]]} />

    <WindBlock top={61} b="9" d="11" title="2) Směr větru Θ = 90°" />
  </SheetLayer>
);

const SheetBase = React.memo(() => (
  <SheetLayer>
    <CornerHead>
      <Ico width="9" height="9" viewBox="0 0 9 9">
        <path d="M9 0V9H0z" fill="#e4e4e4" />
      </Ico>
    </CornerHead>
    {COLS.map((l, i) => (
      <ColHead key={l}>{i < 45 ? l : ""}</ColHead>
    ))}
    {Array.from({ length: 65 }, (_, r) => (
      <React.Fragment key={r}>
        <RowHead>{r < 64 ? r + 1 : ""}</RowHead>
        {COLS.map((l) => (
          <GridCell key={l} />
        ))}
      </React.Fragment>
    ))}
  </SheetLayer>
));

/* ---------- page ---------- */

const RIBBON_TABS: [string, number][] = [
  ["File", 40], ["Home", 48], ["Insert", 45], ["Draw", 45], ["Page Layout", 72], ["Formulas", 64],
  ["Data", 37], ["Review", 54], ["View", 38], ["Developer", 69], ["Help", 39], ["Bimplus", 59],
  ["Data Streamer", 80], ["Power Pivot", 76], ["Team", 41], ["Script Lab", 67],
];

const SplitIcon = ({ icon, label, w }: { icon: React.ReactNode; label: string; w: number }) => (
  <SplitButton $w={w}>
    {icon}
    <SplitRule />
    <SplitLabel>{label}</SplitLabel>
    <Caret />
  </SplitButton>
);

export default function App() {
  return (
    <Window>
      <GlobalStyle />

      <TitleBar>
        <TitleLeft>
          <AutoSaveLabel>AutoSave</AutoSaveLabel>
          <Toggle>
            On
            <ToggleDot />
          </Toggle>
          <QatCell $w={30}>
            <Ico width="13" height="13" viewBox="0 0 13 13" fill="none" stroke="#a8a8a8">
              <path d="M1 1h9l2 2v9H1z" />
              <path d="M3 1v4h6V1M4 12V8h5v4" />
            </Ico>
          </QatCell>
          <QatCell $w={40}>
            <Ico width="12" height="13" viewBox="0 0 12 13" fill="none" stroke="#7c7c7c">
              <path d="M5 1L1 5l4 3M1 5h6c5 0 5 7-1 7" />
            </Ico>
          </QatCell>
          <QatCell $w={30}>
            <Ico width="12" height="13" viewBox="0 0 12 13" fill="none" stroke="#7c7c7c">
              <path d="M7 1l4 4-4 3M11 5H5c-5 0-5 7 1 7" />
            </Ico>
          </QatCell>
          <QatCell $w={44}>
            <Ico width="11" height="14" viewBox="0 0 11 14" fill="none" stroke="#b0b0b0">
              <circle cx="5" cy="3" r="2.3" />
              <path d="M4 3v6l-2-1 3 5h4l1-6-4-1" />
            </Ico>
            <Caret $light />
          </QatCell>
          <QatCell $w={24}>
            <Ico width="12" height="13" viewBox="0 0 12 13" fill="#b0b0b0">
              <rect x="0" y="0" width="12" height="13" />
              <path d="M2 2h1v1H2zM2 5h1v1H2zM2 8h1v1H2zM9 2h1v1H9zM9 5h1v1H9zM9 8h1v1H9z" fill="#656565" />
            </Ico>
            <Caret $light />
          </QatCell>
          <QatCell $w={36}>
            <Ico width="6" height="6" viewBox="0 0 6 6" fill="#c8c8c8">
              <path d="M0 0h6v1H0zM0 2.5h6L3 6z" />
            </Ico>
          </QatCell>
        </TitleLeft>
        <TitleText>
          VitrDleCSNEN1994-1-1&nbsp; - &nbsp;Last Saved 18.07.2019 12:47
          <Caret $light />
        </TitleText>
        <TitleRight>
          <UserName>Jaroslav Brož</UserName>
          <WinButton>
            <Ico width="11" height="10" viewBox="0 0 11 10" fill="none" stroke="#a8a8a8">
              <path d="M0.5 0.5h10v9h-10zM0.5 2.5h10M5.5 8V4M3.5 6l2-2 2 2" />
            </Ico>
          </WinButton>
          <WinButton>
            <Ico width="10" height="2" viewBox="0 0 10 2" stroke="#8e8e8e">
              <path d="M0 1h10" />
            </Ico>
          </WinButton>
          <WinButton>
            <Ico width="10" height="10" viewBox="0 0 10 10" fill="none" stroke="#9c9c9c">
              <path d="M0.5 2.5h7v7h-7zM2.5 2.5v-2h7v7h-2" />
            </Ico>
          </WinButton>
          <WinButton>
            <Ico width="10" height="10" viewBox="0 0 10 10" stroke="#9c9c9c">
              <path d="M0.5 0.5l9 9M9.5 0.5l-9 9" />
            </Ico>
          </WinButton>
        </TitleRight>
      </TitleBar>

      <Ribbon>
        <TabRow>
          {RIBBON_TABS.map(([t, w]) => (
            <RibbonTab key={t} $w={w} $active={t === "Home"}>{t}</RibbonTab>
          ))}
          <SearchHint>
            <Ico width="11" height="12" viewBox="0 0 11 12" fill="none" stroke="#444">
              <circle cx="7" cy="4.5" r="3.7" />
              <path d="M4.5 7.5L0.5 11.5" />
            </Ico>
            Tell me what you want to do
          </SearchHint>
          <TopActions>
            <TopButton $w={49}>
              <Ico width="9" height="10" viewBox="0 0 9 10" fill="none" stroke="#444">
                <path d="M0.5 3.5v6h7V6M3 6c0-3 2-4 5-4M6 0.5L8 2 6 3.5" />
              </Ico>
              Share
            </TopButton>
            <TopButton $w={73}>
              <Ico width="9" height="9" viewBox="0 0 9 9" fill="none" stroke="#444">
                <path d="M0.5 0.5h8v6h-5l-2 2v-2h-1z" />
              </Ico>
              Comments
            </TopButton>
          </TopActions>
        </TabRow>

        <GroupRow>
          <Group $w={146}>
            <GroupBody $pl={14}>
              <SplitIcon icon={<PasteIcon />} label="Paste" w={27} />
              <SmallColumn $ml={14}>
                <SmallRow><IconSlot><ScissorsIcon /></IconSlot>Cut</SmallRow>
                <SmallRow>
                  <IconSlot><CopyIcon /></IconSlot>Copy
                  <TextAfter $ml={8}><Caret /></TextAfter>
                </SmallRow>
                <SmallRow><IconSlot><PainterIcon /></IconSlot>Format Painter</SmallRow>
              </SmallColumn>
            </GroupBody>
            <GroupLabel>Clipboard<Launch /></GroupLabel>
          </Group>

          <Group $w={198}>
            <GroupBody $pl={8} $col>
              <ToolRow $mt={10}>
                <Combo $w={93.5} $mr={0.5}>Calibri<Caret /></Combo>
                <Combo $w={32}>11<Caret /></Combo>
                <ToolCell><SansLetter>A</SansLetter><GrowMark up /></ToolCell>
                <ToolCell><SansLetter $size={10}>A</SansLetter><GrowMark /></ToolCell>
              </ToolRow>
              <ToolRow $mt={9}>
                <ToolCell><ToolLetter $bold>B</ToolLetter></ToolCell>
                <ToolCell><ToolLetter $italic>I</ToolLetter></ToolCell>
                <ToolCell $w={33}><ToolLetter $under>U</ToolLetter><Caret /></ToolCell>
                <ToolCell $w={29}><BorderIcon /><Caret /></ToolCell>
                <ToolCell $w={35}><FillWithBar $bar="#ffff00"><BucketIcon /></FillWithBar><Caret /></ToolCell>
                <ToolCell $w={28}><LetterWithBar $bar="#ff0000">A</LetterWithBar><Caret /></ToolCell>
              </ToolRow>
            </GroupBody>
            <GroupLabel>Font<Launch /></GroupLabel>
          </Group>

          <Group $w={263}>
            <GroupBody $pl={8} $col>
              <ToolRow $mt={10}>
                <ToolCell><LinesIcon rows={ALIGN.top} /></ToolCell>
                <ToolCell><LinesIcon rows={ALIGN.mid} /></ToolCell>
                <ToolCell $on><LinesIcon rows={ALIGN.bot} /></ToolCell>
                <ToolCell $w={34}><OrientIcon /><Caret /></ToolCell>
                <ToolCell $w={30} />
                <WrapIcon />
                <TextAfter>Wrap Text</TextAfter>
              </ToolRow>
              <ToolRow $mt={9}>
                <ToolCell><LinesIcon rows={ALIGN.left} /></ToolCell>
                <ToolCell $on><LinesIcon rows={ALIGN.center} /></ToolCell>
                <ToolCell><LinesIcon rows={ALIGN.right} /></ToolCell>
                <ToolCell><IndentIcon flip /></ToolCell>
                <ToolCell><IndentIcon /></ToolCell>
                <ToolCell $w={5} />
                <MergeIcon />
                <TextAfter $ml={4}>Merge &amp; Center</TextAfter>
                <TextAfter $ml={8}><Caret /></TextAfter>
              </ToolRow>
            </GroupBody>
            <GroupLabel>Alignment<Launch /></GroupLabel>
          </Group>

          <Group $w={159}>
            <GroupBody $pl={7} $col>
              <ToolRow $mt={10}>
                <Combo $w={144}>General<Caret /></Combo>
              </ToolRow>
              <ToolRow $mt={9}>
                <ToolCell $w={32}><AccountingIcon /><Caret /></ToolCell>
                <ToolCell><SansLetter $size={13}>%</SansLetter></ToolCell>
                <ToolCell><SansLetter $size={15} $bold>,</SansLetter></ToolCell>
                <ToolCell><DecimalIcon inc /></ToolCell>
                <ToolCell><DecimalIcon /></ToolCell>
              </ToolRow>
            </GroupBody>
            <GroupLabel>Number<Launch /></GroupLabel>
          </Group>

          <Group $w={540}>
            <GroupBody $pl={10}>
              <BigButton $w={52}>
                <BigIconBox><CondFormatIcon /></BigIconBox>
                <BigText>Conditional<BigLine>Formatting <Caret /></BigLine></BigText>
              </BigButton>
              <BigButton $w={48}>
                <BigIconBox><FormatTableIcon /></BigIconBox>
                <BigText>Format as<BigLine>Table <Caret /></BigLine></BigText>
              </BigButton>
              <GalleryWrap>
                <Gallery>
                  <StyleChip $bg="#fff" $fg="#111" $line="#6a6a6a">Normal</StyleChip>
                  <StyleChip $bg="#ffc7ce" $fg="#b32a45">Bad</StyleChip>
                  <StyleChip $bg="#c6efce" $fg="#2f8a41">Good</StyleChip>
                  <StyleChip $bg="#ffeb9c" $fg="#a8781c">Neutral</StyleChip>
                  <StyleChip $bg="#f2f2f2" $fg="#fa7d00" $line="#8a8a8a" $bold>Calculation</StyleChip>
                  <StyleChip $bg="#fff" $fg="#7f7f7f" $italic>Explanatory ...</StyleChip>
                  <StyleChip $bg="#a5a5a5" $fg="#fff" $line="#555" $bold>Check Cell</StyleChip>
                  <StyleChip $bg="#ffcc99" $fg="#4a4a7a" $line="#8a8a8a">Input</StyleChip>
                  <StyleChip $bg="#fff" $fg="#fa7d00" $under="#ffa24d">Linked Cell</StyleChip>
                  <StyleChip $bg="#ffffcc" $fg="#222" $line="#b2b2b2">Note</StyleChip>
                </Gallery>
                <GalleryMore><Caret /></GalleryMore>
              </GalleryWrap>
            </GroupBody>
            <GroupLabel>Styles</GroupLabel>
          </Group>

          <Group $w={136}>
            <GroupBody $pl={9}>
              <SplitIcon icon={<InsertCellIcon />} label="Insert" w={40} />
              <SplitIcon icon={<DeleteCellIcon />} label="Delete" w={40} />
              <BigButton $w={40}>
                <BigIconBox><FormatCellIcon /></BigIconBox>
                <BigText>Format<Caret /></BigText>
              </BigButton>
            </GroupBody>
            <GroupLabel>Cells</GroupLabel>
          </Group>

          <Group $w={174}>
            <GroupBody $pl={14}>
              <SmallColumn $w={74}>
                <SmallRow $h={21}>
                  <IconSlot><SansLetter $size={14}>Σ</SansLetter></IconSlot>AutoSum
                  <TextAfter $ml={8}><Caret /></TextAfter>
                </SmallRow>
                <SmallRow $h={21}><IconSlot><FillIcon /></IconSlot>Fill <Caret /></SmallRow>
                <SmallRow $h={21}><IconSlot><ClearIcon /></IconSlot>Clear <Caret /></SmallRow>
              </SmallColumn>
              <BigButton $w={40}>
                <BigIconBox><SortIcon /></BigIconBox>
                <BigText>Sort &amp;<BigLine>Filter <Caret /></BigLine></BigText>
              </BigButton>
              <BigButton $w={39}>
                <BigIconBox><MagnifierIcon /></BigIconBox>
                <BigText>Find &amp;<BigLine>Select <Caret /></BigLine></BigText>
              </BigButton>
            </GroupBody>
            <GroupLabel>Editing</GroupLabel>
          </Group>

          <Group $w={104}>
            <GroupBody $pl={8}>
              <BigButton $w={44}>
                <BigIconBox><ReferenceIcon /></BigIconBox>
                <BigText>Reference</BigText>
              </BigButton>
              <BigButton $w={44}>
                <BigIconBox><TranslatorIcon /></BigIconBox>
                <BigText>Translator</BigText>
              </BigButton>
            </GroupBody>
            <GroupLabel>Functions Translator</GroupLabel>
          </Group>

          <CollapseEnd><CaretUp /></CollapseEnd>
        </GroupRow>
      </Ribbon>

      <FormulaArea>
        <NameBox>I37<Caret /></NameBox>
        <FormulaDots><i /><i /><i /></FormulaDots>
        <FormulaButtons>
          <Ico width="9" height="9" viewBox="0 0 9 9" stroke="#8a8a8a">
            <path d="M0.5 0.5l8 8M8.5 0.5l-8 8" />
          </Ico>
          <Ico width="10" height="9" viewBox="0 0 10 9" stroke="#8a8a8a" fill="none">
            <path d="M0.5 5l3 3 6-7.5" />
          </Ico>
          <FxMark>fx</FxMark>
        </FormulaButtons>
        <FormulaInput>
          qp [kN.m-2] =
          <CaretUp />
        </FormulaInput>
      </FormulaArea>

      <SheetArea>
        <Stack>
          <SheetBase />
          <SheetContent />
        </Stack>
        <VScroll>
          <ScrollBtn>
            <Ico width="6" height="4" viewBox="0 0 6 4"><path d="M3 0l3 4H0z" fill="#333" /></Ico>
          </ScrollBtn>
          <VThumb />
          <Spacer />
          <ScrollBtn>
            <Ico width="6" height="4" viewBox="0 0 6 4"><path d="M0 0h6L3 4z" fill="#333" /></Ico>
          </ScrollBtn>
        </VScroll>
      </SheetArea>

      <TabBar>
        <TabNav>
          <Ico width="4" height="6" viewBox="0 0 4 6"><path d="M4 0v6L0 3z" fill="#8e8e8e" /></Ico>
          <Ico width="4" height="6" viewBox="0 0 4 6"><path d="M0 0v6l4-3z" fill="#8e8e8e" /></Ico>
        </TabNav>
        <SheetTab $w={104}>4.5 Tlak větru qp(z)</SheetTab>
        <SheetTab $w={94} $active>7.2.2 Svislé stěny</SheetTab>
        <SheetTab $w={106} $noEdge>7.2.3 Ploché střechy</SheetTab>
        <SheetTab $w={111}>7.2.4 Pultové střechy</SheetTab>
        <SheetTab $w={112}>7.2.5 Sedlové střechy</SheetTab>
        <TabAdd>
          <Ico width="12" height="12" viewBox="0 0 12 12" fill="none" stroke="#d2d2d2">
            <circle cx="6" cy="6" r="5.4" />
            <path d="M6 3v6M3 6h6" />
          </Ico>
        </TabAdd>
        <TabDots><i /><i /><i /></TabDots>
        <HScroll>
          <ScrollBtn $w={10}>
            <Ico width="4" height="6" viewBox="0 0 4 6"><path d="M4 0v6L0 3z" fill="#333" /></Ico>
          </ScrollBtn>
          <HTrack />
          <HRest />
          <ScrollBtn $w={11}>
            <Ico width="4" height="6" viewBox="0 0 4 6"><path d="M0 0v6l4-3z" fill="#333" /></Ico>
          </ScrollBtn>
        </HScroll>
      </TabBar>

      <StatusBar>
        <Ico width="12" height="11" viewBox="0 0 12 11" fill="#e8e8e8">
          <path d="M0 0h5v2H0zM0 3h11v8H0z" />
          <path d="M2 5h7M2 7h7" stroke="#a8a8a8" />
        </Ico>
        <Spacer />
        <StatusText $mr={19}>Count: 2</StatusText>
        <Ico width="12" height="11" viewBox="0 0 12 11">
          <rect width="10" height="8" fill="#eee" />
          <circle cx="9" cy="8" r="2.7" fill="#aaa" stroke="#eee" />
        </Ico>
        <StatusText $ml={3} $mr={15}>Display Settings</StatusText>
        <ViewButton $on>
          <Ico width="13" height="13" viewBox="0 0 13 13" fill="none" stroke="#e4e4e4">
            <path d="M0.5 0.5h12v12h-12zM4.5 0v13M8.5 0v13M0 4.5h13M0 8.5h13" />
          </Ico>
        </ViewButton>
        <ViewButton>
          <Ico width="13" height="13" viewBox="0 0 13 13" fill="none" stroke="#d8d5d2">
            <path d="M0.5 0.5h12v12h-12zM3.5 2.5h6v8h-6zM5 5h3M5 8h3" />
          </Ico>
        </ViewButton>
        <ViewButton>
          <Ico width="13" height="13" viewBox="0 0 13 13" fill="none" stroke="#e4e4e4">
            <path d="M0.5 0.5h12v12h-12z" />
            <path d="M1 1h5v7H1zM7 1h5v7H7z" fill="#f4f4f4" stroke="none" />
          </Ico>
        </ViewButton>
        <ZoomSign>−</ZoomSign>
        <ZoomTrack>
          <ZoomThumb />
          <ZoomTick />
        </ZoomTrack>
        <ZoomSign>+</ZoomSign>
        <StatusText $ml={8} $w={17}>85 %</StatusText>
      </StatusBar>
    </Window>
  );
}
